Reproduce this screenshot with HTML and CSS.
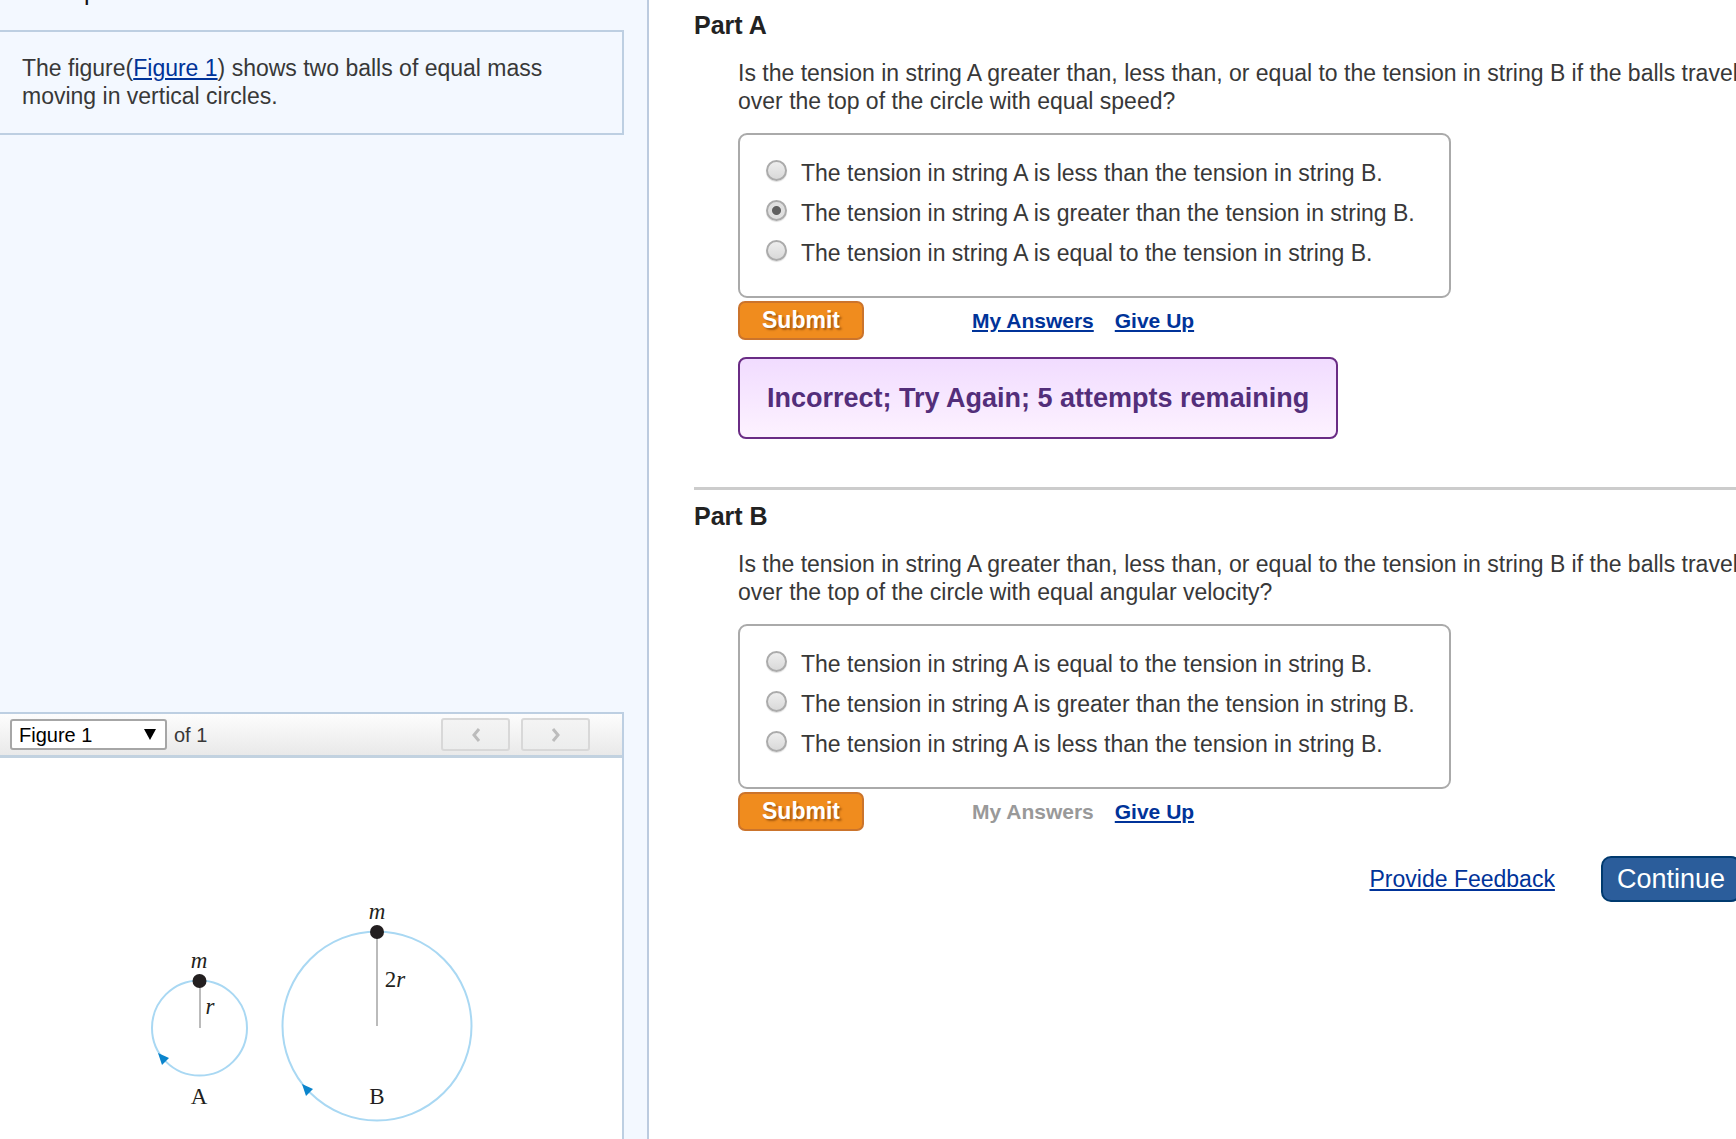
FILE: index.html
```html
<!DOCTYPE html>
<html lang="en">

<head>
    <meta charset="UTF-8">
    <meta name="viewport" content="width=device-width, initial-scale=1.0">
    <title>Tension in Strings</title>
    <link rel="stylesheet" href="styles.css">
</head>

<body>
    <div class="page">
        <aside class="sidebar">
            <div class="sidebar-title">p</div>
            <div class="intro">
                The figure(<a href="#figure">Figure 1</a>) shows two balls of equal mass moving in vertical circles.
            </div>

            <div class="figure-panel" id="figure">
                <div class="figure-bar">
                    <div class="select-wrap">
                        <select id="figureSelect" aria-label="Figure">
                            <option>Figure 1</option>
                        </select>
                    </div>
                    <label for="figureSelect">of 1</label>
                    <div class="figure-nav">
                        <button type="button" aria-label="Previous figure" disabled>
                            <svg width="12" height="16" viewBox="0 0 12 16"><path d="M9 2L4 8l5 6" /></svg>
                        </button>
                        <button type="button" aria-label="Next figure" disabled>
                            <svg width="12" height="16" viewBox="0 0 12 16"><path d="M3 2l5 6-5 6" /></svg>
                        </button>
                    </div>
                </div>
                <svg class="figure" width="480" height="381" viewBox="0 0 480 381">
                    <!-- circle A -->
                    <circle class="orbit" cx="199.500" cy="270" r="47.500" />
                    <path class="string" d="M200 223v47" />
                    <circle class="ball" cx="199.500" cy="223" r="7" />
                    <path class="arrow" d="M158 295l11 5-7 7z" />
                    <text class="var" x="199" y="210">m</text>
                    <text class="var" x="210" y="256">r</text>
                    <text x="199" y="346">A</text>
                    <!-- circle B -->
                    <circle class="orbit" cx="377" cy="268" r="94.500" />
                    <path class="string" d="M377 174v94" />
                    <circle class="ball" cx="377" cy="174" r="7" />
                    <path class="arrow" d="M302 326l11 5-7 7z" />
                    <text class="var" x="377" y="161">m</text>
                    <text x="395" y="229">2<tspan class="var">r</tspan></text>
                    <text x="377" y="346">B</text>
                </svg>
            </div>
        </aside>

        <main class="content">
            <section class="part">
                <h2>Part A</h2>
                <form class="part-body">
                    <p>Is the tension in string A greater than, less than, or equal to the tension in string B if the balls travel over the top of the circle with equal speed?</p>
                    <div class="choices">
                        <label><input type="radio" name="partA"> The tension in string A is less than the tension in string B.</label>
                        <label><input type="radio" name="partA" checked> The tension in string A is greater than the tension in string B.</label>
                        <label><input type="radio" name="partA"> The tension in string A is equal to the tension in string B.</label>
                    </div>
                    <div class="actions">
                        <button type="button" class="submit">Submit</button>
                        <a href="#">My Answers</a>
                        <a href="#">Give Up</a>
                    </div>
                    <div class="feedback">Incorrect; Try Again; 5 attempts remaining</div>
                </form>
            </section>

            <section class="part">
                <h2>Part B</h2>
                <form class="part-body">
                    <p>Is the tension in string A greater than, less than, or equal to the tension in string B if the balls travel over the top of the circle with equal angular velocity?</p>
                    <div class="choices">
                        <label><input type="radio" name="partB"> The tension in string A is equal to the tension in string B.</label>
                        <label><input type="radio" name="partB"> The tension in string A is greater than the tension in string B.</label>
                        <label><input type="radio" name="partB"> The tension in string A is less than the tension in string B.</label>
                    </div>
                    <div class="actions">
                        <button type="button" class="submit">Submit</button>
                        <span class="off">My Answers</span>
                        <a href="#">Give Up</a>
                    </div>
                </form>
            </section>

            <div class="page-actions">
                <a href="#">Provide Feedback</a>
                <button type="button" class="continue">Continue</button>
            </div>
        </main>
    </div>
</body>

</html>
```
FILE: styles.css
```css
* {
    box-sizing: border-box;
}

body {
    margin: 0;
    font-family: "Liberation Sans", Arial, sans-serif;
    font-size: 23px;
    line-height: 28px;
    color: #383838;
    background: #fff;
}

a {
    color: #003399;
    text-underline-offset: 2px;
}

.page {
    display: flex;
    min-height: 100vh;
    overflow: hidden;
}

/* left column */
.sidebar {
    display: flex;
    flex-direction: column;
    flex: 0 0 649px;
    padding-right: 23px;
    background: #f3f8ff;
    border-right: 2px solid #bccbdf;
}

.sidebar-title {
    display: flex;
    align-items: flex-end;
    height: 5px;
    margin-bottom: 25px;
    padding-left: 84px;
    overflow: hidden;
    font-size: 25px;
    color: #111;
}

.intro {
    padding: 22px 60px 23px 22px;
    border: 2px solid #bdcfe2;
    border-left: 0;
}

.figure-panel {
    margin-top: auto;
    background: #fff;
    border: 2px solid #bdcfe2;
    border-width: 2px 2px 0 0;
}

.figure-bar {
    display: flex;
    align-items: center;
    height: 44px;
    padding: 0 32px 0 10px;
    font-size: 20px;
    background: linear-gradient(#fdfdfd, #e9e9e9);
    border-bottom: 3px solid #c2d2e0;
}

.select-wrap {
    position: relative;
    margin-right: 7px;
}

.select-wrap::after {
    content: "";
    position: absolute;
    top: 10px;
    right: 11px;
    border: 6px solid transparent;
    border-top: 11px solid #000;
    border-bottom: 0;
    pointer-events: none;
}

.select-wrap select {
    display: block;
    width: 157px;
    height: 31px;
    padding: 0 7px;
    appearance: none;
    font: inherit;
    color: #000;
    background: #fff;
    border: 2px solid #a6a6a6;
    border-radius: 3px;
}

.figure-nav {
    display: flex;
    gap: 11px;
    margin-left: auto;
}

.figure-nav button {
    display: flex;
    align-items: center;
    justify-content: center;
    width: 69px;
    height: 33px;
    padding: 0;
    background: linear-gradient(#f4f4f4, #eceded);
    border: 2px solid #d8d8d8;
    border-radius: 3px;
}

.figure-nav path {
    fill: none;
    stroke: #bcbcbc;
    stroke-width: 3;
}

.figure {
    display: block;
    font-family: "Liberation Serif", "Times New Roman", serif;
    font-size: 23px;
    text-anchor: middle;
    fill: #231f20;
}

.figure .var {
    font-style: italic;
}

.orbit {
    fill: none;
    stroke: #a9d8f3;
    stroke-width: 2;
}

.string {
    stroke: #bbb;
    stroke-width: 2;
}

.arrow {
    fill: #0a84cc;
}

/* right column */
.content {
    flex: 1;
    min-width: 0;
    padding: 11px 0 0 45px;
}

.part + .part {
    margin-top: 48px;
    padding-top: 12px;
    border-top: 3px solid #ccc;
}

.part h2 {
    margin: 0 0 20px;
    font-size: 25px;
    color: #222;
}

.part-body {
    padding-left: 44px;
}

/* long questions run right up to the window edge */
.part-body p {
    margin: 0 -6px 18px 0;
}

.choices {
    width: 713px;
    max-width: 100%;
    padding: 18px 26px 23px;
    border: 2px solid #aaa;
    border-radius: 9px;
}

.choices label {
    display: flex;
    align-items: center;
    gap: 14px;
    height: 40px;
}

.choices input {
    flex: none;
    width: 21px;
    height: 21px;
    margin: 0 0 6px;
    appearance: none;
    background: linear-gradient(#eee, #d9d9d9);
    border: 2px solid #ababab;
    border-radius: 50%;
    box-shadow: 0 1px 1px #ddd;
}

.choices input:checked {
    background: radial-gradient(circle, #606060 4px, #e0e0e0 5px);
}

.actions {
    display: flex;
    align-items: center;
    gap: 21px;
    margin-top: 3px;
    font-size: 21px;
    font-weight: bold;
}

.actions .off {
    color: #999;
}

.submit {
    width: 126px;
    height: 39px;
    margin-right: 87px;
    padding: 0;
    font: bold 23px "Liberation Sans", Arial, sans-serif;
    color: #fff;
    text-shadow: 2px 2px 2px #a85c10;
    background: #f08c1e;
    border: 2px solid #cb742c;
    border-radius: 7px;
}

.feedback {
    width: fit-content;
    margin-top: 17px;
    padding: 25px 27px;
    font-size: 27px;
    font-weight: bold;
    color: #532e7a;
    background: linear-gradient(#f1dcff, #fdf2ff);
    border: 2px solid #6a2c85;
    border-radius: 8px;
}

.page-actions {
    display: flex;
    align-items: center;
    justify-content: flex-end;
    gap: 46px;
    margin: 25px -5px 0 0;
}

.continue {
    height: 46px;
    padding: 0 14px;
    font: 27px "Liberation Sans", Arial, sans-serif;
    color: #fff;
    background: #2b5d9b;
    border: 2px solid #003a6f;
    border-radius: 10px;
}
```
